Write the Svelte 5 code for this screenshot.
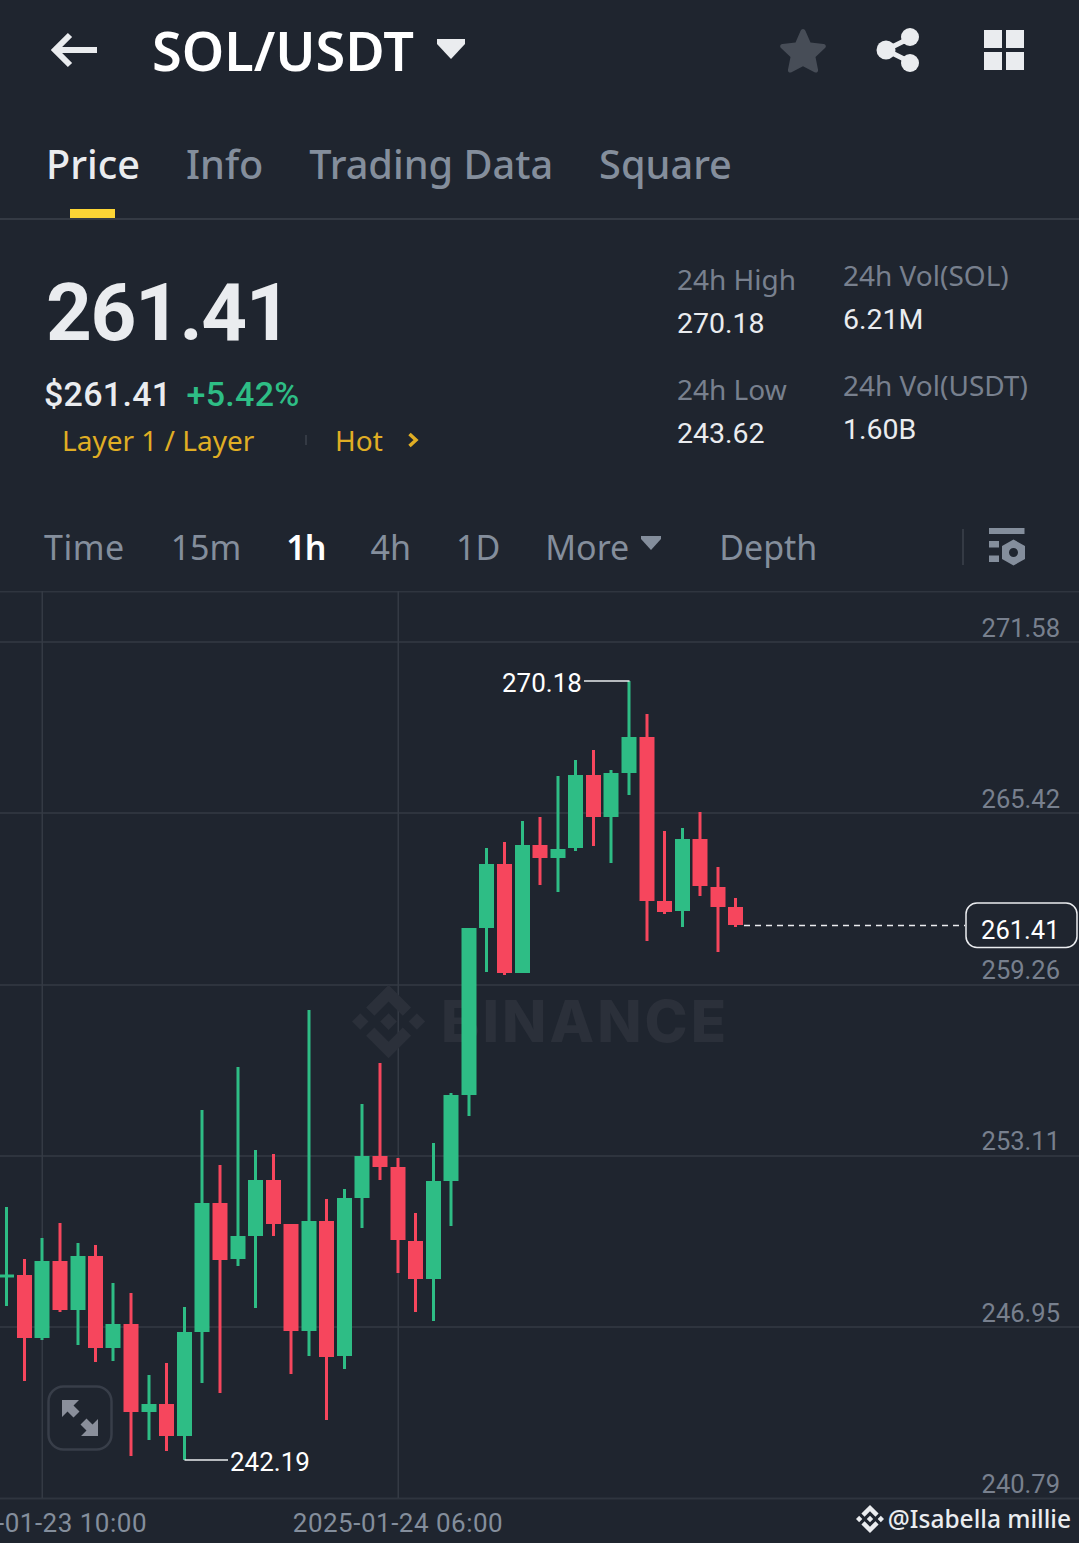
<script>
  const G = '#2ebd85', R = '#f6465d';
  // [centre x, isUp, wickTop, wickBottom, bodyTop, bodyBottom]
  const candles = [
    [6.5,1,1207,1306,1275,1277],[24.5,0,1259,1381,1275,1338],[42,1,1238,1340,1261,1338],[60,0,1223,1312,1261,1310],
    [78,1,1243,1345,1256,1310],[95.5,0,1245,1362,1256,1348],[113,1,1283,1361,1324,1348],[131,0,1293,1456,1324,1412],
    [149,1,1375,1440,1404,1412],[166.5,0,1363,1451,1404,1436],[184.5,1,1307,1460,1332,1436],[202,1,1110,1383,1203,1332],
    [220,0,1165,1393,1203,1260],[238,1,1067,1266,1236,1259],[255.5,1,1150,1308,1180,1236],[273.5,0,1154,1236,1180,1224],
    [291,0,1224,1374,1224,1331],[309,1,1010,1356,1221,1331],[326.5,0,1199,1420,1221,1357],[344.5,1,1189,1369,1198,1356],
    [362,1,1104,1228,1156,1198],[380,0,1063,1180,1156,1167],[398,0,1158,1273,1167,1240],[415.5,0,1213,1312,1241,1279],
    [433.5,1,1143,1321,1181,1279],[451,1,1093,1226,1095,1181],[469,1,928,1116,928,1095],[486.5,1,848,972,864,928],
    [504.5,0,842,975,864,973],[522.5,1,821,973,845,973],[540,0,817,885,845,858],[558,1,776,892,849,858],
    [575.5,1,760,851,775,848],[593.5,0,750,846,775,817],[611,1,770,863,773,817],[629,1,681,795,737,773],
    [647,0,714,941,737,901],[664.5,0,831,914,901,912],[682.5,1,828,927,839,911],[700,0,812,896,839,886],
    [718,0,867,952,887,907],[735.5,0,898,927,907,925]
  ];
  const top = 591;
  const grid = [642,813,985,1156,1327];
  const axis = [['271.58',627],['265.42',798],['259.26',969],['253.11',1140],['246.95',1312],['240.79',1483]];
  const tabs = ['Info','Trading Data','Square'];
  const intervals = [['Time','first'],['15m',''],['1h','on'],['4h',''],['1D',''],];
</script>

{#snippet logo(cls)}
  <g class={cls}>
    <polygon points="38.73,53.2 63.31,28.62 87.9,53.21 102.2,38.91 63.31,0 24.43,38.9"/>
    <polygon points="0,63.31 14.3,49.01 28.6,63.31 14.3,77.61"/>
    <polygon points="38.73,73.41 63.31,98 87.9,73.4 102.2,87.7 63.31,126.61 24.43,87.7"/>
    <polygon points="98.01,63.31 112.31,49.01 126.61,63.31 112.31,77.61"/>
    <polygon points="63.31,48.78 77.83,63.3 63.31,77.82 48.8,63.3"/>
  </g>
{/snippet}

<div class="page">
  <header class="top">
    <svg class="back" viewBox="0 0 48 36" width="48" height="36"><path d="M20 3 5 18l15 15M5 18h42" fill="none" stroke="#eaecef" stroke-width="6"/></svg>
    <span class="pair">SOL/USDT</span>
    <svg class="caret" viewBox="0 0 28 20" width="28" height="20"><path d="M0 0h28v5L14 20 0 5z" fill="#eaecef"/></svg>
    <span class="grow"></span>
    <svg class="star" viewBox="0 0 46 46" width="46" height="46"><path d="M23 2c1 0 2 .7 2.500 2l5 11.500 13 1.500c2.500.5 3 2.500 1.500 4l-9.500 9 2.500 12.500c.4 2.500-1.500 3.800-3.500 2.700L23 39.200l-11.500 6c-2 1-3.900-.2-3.500-2.700l2.500-12.500-9.500-9c-1.500-1.500-1-3.500 1.500-4l13-1.500 5-11.500C21 2.700 22 2 23 2z" fill="#474d57"/></svg>
    <svg class="share" viewBox="0 0 44 46" width="44" height="46">
      <path d="M34 11 10 23l24 12" fill="none" stroke="#eaecef" stroke-width="5"/>
      <circle cx="34" cy="10" r="9" fill="#eaecef"/><circle cx="10" cy="23" r="9.500" fill="#eaecef"/><circle cx="34" cy="36" r="9" fill="#eaecef"/>
    </svg>
    <svg class="apps" viewBox="0 0 40 40" width="40" height="40">
      <path d="M0 0h18v18H0zM22 0h18v18H22zM0 22h18v18H0zM22 22h18v18H22z" fill="#eaecef"/>
    </svg>
  </header>

  <nav class="tabs">
    <span class="tab active">Price<i></i></span>
    {#each tabs as t}<span class="tab">{t}</span>{/each}
  </nav>

  <section class="stats">
    <div class="left">
      <div class="last">261.41</div>
      <div class="sub"><span class="usd">$261.41</span><span class="pct">+5.42%</span></div>
      <div class="tags">
        <span class="t1">Layer 1 / Layer</span>
        <i class="sep"></i>
        <span>Hot</span>
        <svg viewBox="0 0 12 16" width="12" height="16"><path d="M2.500 2 9 8l-6.500 6" fill="none" stroke="#e0ae24" stroke-width="3.500"/></svg>
      </div>
    </div>
    <div class="col c1">
      <div class="lab">24h High</div><div class="val">270.18</div>
      <div class="lab l2">24h Low</div><div class="val">243.62</div>
    </div>
    <div class="col c2">
      <div class="lab">24h Vol(SOL)</div><div class="val">6.21M</div>
      <div class="lab l2">24h Vol(USDT)</div><div class="val">1.60B</div>
    </div>
  </section>

  <div class="bar">
    {#each intervals as [t, c]}<span class="iv {c}">{t}</span>{/each}
    <span class="iv more">More<svg viewBox="0 0 20 14" width="20" height="14"><path d="M0 0h20v3L10 14 0 3z" fill="#848e9c"/></svg></span>
    <span class="iv depth">Depth</span>
    <span class="grow"></span>
    <i class="vsep"></i>
    <svg class="cfg" viewBox="0 0 36 38" width="36" height="38">
      <path d="M0 0h35.500v6H0zM0 13h10v6.500H0zM0 27.500h10V34H0z" fill="#848e9c"/>
      <path fill-rule="evenodd" d="M24.500 11.500 36 18v13l-11.500 6.500L13 31V18zM24.500 20a4.500 4.500 0 1 0 0 9 4.500 4.500 0 0 0 0-9z" fill="#848e9c"/>
    </svg>
  </div>

  <div class="chart">
    <svg viewBox="0 {top} 1079 952" width="1079" height="952">
      {#each grid as y}<rect x="0" y={y-0.75} width="1079" height="1.500" class="gl"/>{/each}
      <rect x="0" y="1497.500" width="1079" height="2" class="gl strong"/>
      <rect x="0" y="590.500" width="1079" height="2" class="gl strong"/>
      <rect x="41.500" y="591" width="1.500" height="907" class="gl"/>
      <rect x="397.500" y="591" width="1.500" height="907" class="gl"/>

      <g transform="translate(352 985) scale(0.578)">{@render logo('wm')}</g>
      <text x="441" y="1042" class="wmt">BINANCE</text>

      <path d="M0 1276h14" stroke={G} stroke-width="3"/>
      {#each candles as [x, up, wt, wb, bt, bb], i}
        <rect x={x-1.5} y={wt} width="3" height={wb-wt} fill={up ? G : R}/>
        {#if i > 0}<rect x={x-7.5} y={bt} width="15" height={bb-bt} fill={up ? G : R}/>{/if}
      {/each}

      <path d="M584 681h45.500" stroke="#eaecef" stroke-width="1.500" fill="none"/>
      <text x="502" y="692" class="mark">270.18</text>
      <path d="M184.500 1460H228" stroke="#eaecef" stroke-width="1.500" fill="none"/>
      <text x="230" y="1471" class="mark">242.19</text>

      <path d="M744 925.500H965" stroke="#eaecef" stroke-width="1.500" stroke-dasharray="6 5" fill="none"/>
      {#each axis as [t, y]}<text x="1060" y={y+10} class="ax">{t}</text>{/each}
      <rect x="966" y="903" width="111" height="44.500" rx="11" fill="#1f252f" stroke="#eaecef" stroke-width="1.500"/>
      <text x="1059.500" y="939" class="ax cur">261.41</text>

      <rect x="48.500" y="1386.500" width="63" height="63" rx="15" fill="#1f252f" stroke="#383e49" stroke-width="2.500"/>
      <path d="M62 1400h17l-5.500 5.500 6 6-6 6-6-6-5.500 5.500zM98 1436H81l5.500-5.500-6-6 6-6 6 6 5.500-5.500z" fill="#8a8f9b"/>

      <text x="147" y="1532" class="date end">-01-23 10:00</text>
      <text x="398" y="1532" class="date mid">2025-01-24 06:00</text>
    </svg>
    <div class="mark-user">
      <svg viewBox="0 0 126.610 126.610" width="28" height="28">{@render logo('ul')}</svg>
      <span>@Isabella millie</span>
    </div>
  </div>
</div>

<style>
  :global(body) { margin: 0; background: #1f252f; }
  .page { width: 1079px; height: 1543px; overflow: hidden; background: #1f252f; color: #eaecef; font-family: "Noto Sans", sans-serif; }
  .grow { flex: 1; }
  i { display: block; }

  .top { height: 100px; display: flex; align-items: center; padding: 0 55px 0 50px; }
  .back { margin-right: 54px; }
  .pair { font: 600 54px/1 "Noto Sans", sans-serif; color: #fff; letter-spacing: 0; }
  .caret { margin: 0 0 2px 23px; }
  .star { margin-right: 50px; }
  .share { margin-right: 64px; }

  .tabs { height: 120px; box-sizing: border-box; display: flex; gap: 46px; align-items: flex-start; padding: 39px 0 0 46px; border-bottom: 2px solid #343a44; }
  .tab { position: relative; font: 500 39.700px/50px "Noto Sans", sans-serif; color: #848e9c; }
  .tab.active { color: #eaecef; }
  .tab i { position: absolute; left: 24px; width: 45px; height: 9px; background: #fcd535; top: 70px; }

  .stats { height: 278px; box-sizing: border-box; display: flex; padding-top: 35px; }
  .left { width: 677px; padding-left: 46px; box-sizing: border-box; }
  .last { font: 700 80px/1 Roboto, sans-serif; letter-spacing: -1.400px; height: 90px; padding-top: 18px; box-sizing: border-box; }
  .sub { display: flex; gap: 15px; margin-top: 29px; font: 500 34px/40px Roboto, sans-serif; margin-left: -2px; letter-spacing: .3px; }
  .pct { color: #2ebd85; }
  .tags { display: flex; align-items: center; color: #e0ae24; font: 400 28px/40px "Noto Sans", sans-serif; margin: 6px 0 0 16px; }
  .t1 { width: 243px; }
  .sep { width: 2px; height: 10px; background: #343a44; margin-right: 28px; }
  .tags svg { margin-left: 24px; }
  .col { box-sizing: border-box; }
  .c1 { width: 166px; padding-top: 6px; }
  .c2 { padding-top: 2px; }
  .lab { font: 400 28px/36px "Noto Sans", sans-serif; color: #78808e; white-space: nowrap; }
  .val { font: 400 28.500px/44px Roboto, sans-serif; color: #eaecef; margin-top: 5px; }
  .l2 { margin-top: 25px; }

  .bar { height: 89px; padding: 4px 54px 0 44px; display: flex; align-items: center; gap: 45px; }
  .iv { font: 400 34px/1 "Noto Sans", sans-serif; color: #848e9c; display: flex; align-items: center; gap: 12px; }
  .iv.first { letter-spacing: .5px; margin-right: 1px; }
  .iv.on { color: #fff; font-weight: 600; letter-spacing: -1px; }
  .more svg { margin-bottom: 8px; }
  .depth { margin-left: 13px; }
  .vsep { width: 2px; height: 36px; background: #343a44; margin-right: -20px; }

  .chart { position: relative; height: 952px; }
  .chart svg { display: block; }
  .gl { fill: #343a44; }
  .strong { fill: #2f353f; }
  .wm { fill: #2b303a; }
  .ul { fill: #eaecef; }
  .wmt { font: 800 58px Inter, sans-serif; fill: #2b303a; letter-spacing: 3px; }
  .mark { font: 400 26px Roboto, sans-serif; fill: #fff; }
  .ax { font: 400 25.500px Roboto, sans-serif; fill: #78808e; text-anchor: end; }
  .ax.cur { fill: #fff; }
  .date { font: 400 26px Roboto, sans-serif; fill: #848e9c; letter-spacing: .5px; }
  .end { text-anchor: end; }
  .mid { text-anchor: middle; }
  .mark-user { position: absolute; right: 8px; top: 912px; display: flex; align-items: center; gap: 4px; color: #eaecef; font: 500 24.500px/32px "Noto Sans", sans-serif; }
</style>
